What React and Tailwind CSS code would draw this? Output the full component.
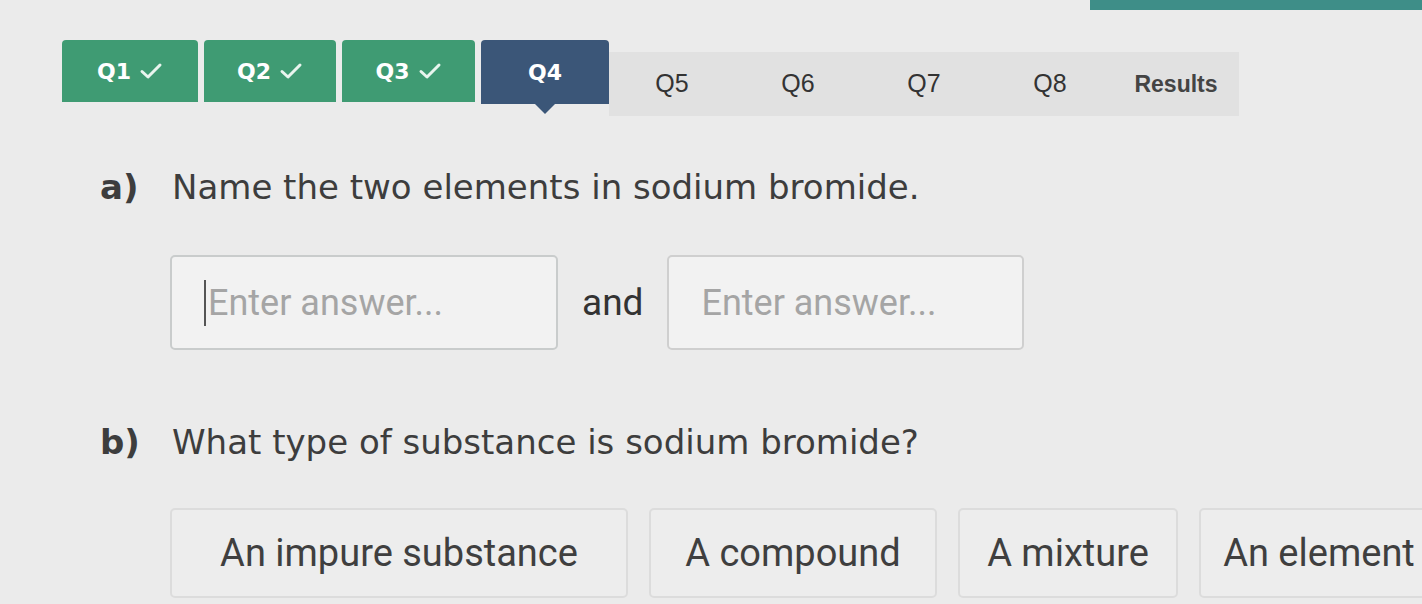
import React from "react";

function Check() {
  return (
    <svg width="24" height="20" viewBox="0 0 24 20" fill="none" className="ml-2">
      <path d="M3 10.5 L9 16 L21 4" stroke="#e8f5ee" strokeWidth="3" strokeLinecap="round" strokeLinejoin="round" />
    </svg>
  );
}

function DoneTab({ label, w }) {
  return (
    <div className={`${w} h-[62px] bg-[#3f9b73] rounded-t-[4px] flex items-center justify-center text-white font-bold text-[22px] [font-family:'DejaVu_Sans',sans-serif]`}>
      <span>{label}</span>
      <Check />
    </div>
  );
}

export default function App() {
  const rest = ["Q5", "Q6", "Q7", "Q8", "Results"];
  return (
    <div className="w-[1422px] h-[604px] overflow-hidden bg-[#ebebeb] [font-family:'DejaVu_Sans',sans-serif] text-[#3a3a3a]">
      <div className="flex justify-end">
        <div className="w-[332px] h-[10px] bg-[#3e8e88]" />
      </div>

      <div className="flex items-start pl-[62px] mt-[30px] gap-[6px]">
        <DoneTab label="Q1" w="w-[136px]" />
        <DoneTab label="Q2" w="w-[132px]" />
        <DoneTab label="Q3" w="w-[133px]" />
        <div className="relative w-[128px] h-[64px] bg-[#3b5678] rounded-t-[4px] flex items-center justify-center text-white font-bold text-[22px]">
          Q4
          <div className="absolute left-1/2 -translate-x-1/2 top-full w-0 h-0 border-l-[10px] border-r-[10px] border-t-[10px] border-l-transparent border-r-transparent border-t-[#3b5678]" />
        </div>
        <div className="-ml-[6px] flex h-[64px] bg-[#e1e1e1] mt-[12px] [font-family:'Liberation_Sans',sans-serif] text-[25px] text-[#333]">
          {rest.map((r) => (
            <div key={r} className={`w-[126px] flex items-center justify-center ${r === "Results" ? "font-bold text-[23px] text-[#444]" : ""}`}>
              {r}
            </div>
          ))}
        </div>
      </div>

      <div className="flex items-center h-[40px] mt-[51px] pl-[100px] text-[34px] text-[#3d3d3d]">
        <span className="w-[72px] font-bold">a)</span>
        <span>Name the two elements in sodium bromide.</span>
      </div>

      <div className="flex items-center pl-[170px] mt-[48px] [font-family:'Roboto',sans-serif]">
        <div className="w-[388px] h-[95px] border-2 border-[#c9cccc] rounded-[5px] bg-[#f2f2f2] flex items-center pl-[32px] text-[36px] text-[#a5a5a5]">
          <span className="w-[2px] h-[46px] bg-[#555] mr-[2px]" />
          Enter answer...
        </div>
        <span className="mx-[24px] text-[37px] text-[#333]">and</span>
        <div className="w-[357px] h-[95px] border-2 border-[#cfcfcf] rounded-[5px] bg-[#f2f2f2] flex items-center pl-[32px] text-[36px] text-[#a5a5a5]">
          Enter answer...
        </div>
      </div>

      <div className="flex items-center h-[40px] mt-[72px] pl-[100px] text-[34px] text-[#3d3d3d]">
        <span className="w-[72px] font-bold">b)</span>
        <span>What type of substance is sodium bromide?</span>
      </div>

      <div className="flex pl-[170px] mt-[46px] gap-[21px] [font-family:'Roboto',sans-serif] text-[38px] text-[#3f3f3f]">
        {[
          ["An impure substance", "w-[458px]"],
          ["A compound", "w-[288px]"],
          ["A mixture", "w-[220px]"],
          ["An element", "w-[240px]"],
        ].map(([t, w]) => (
          <div key={t} className={`${w} shrink-0 h-[90px] border-2 border-[#dcdcdc] rounded-[5px] bg-[#ededed] flex items-center justify-center whitespace-nowrap`}>
            {t}
          </div>
        ))}
      </div>
    </div>
  );
}
